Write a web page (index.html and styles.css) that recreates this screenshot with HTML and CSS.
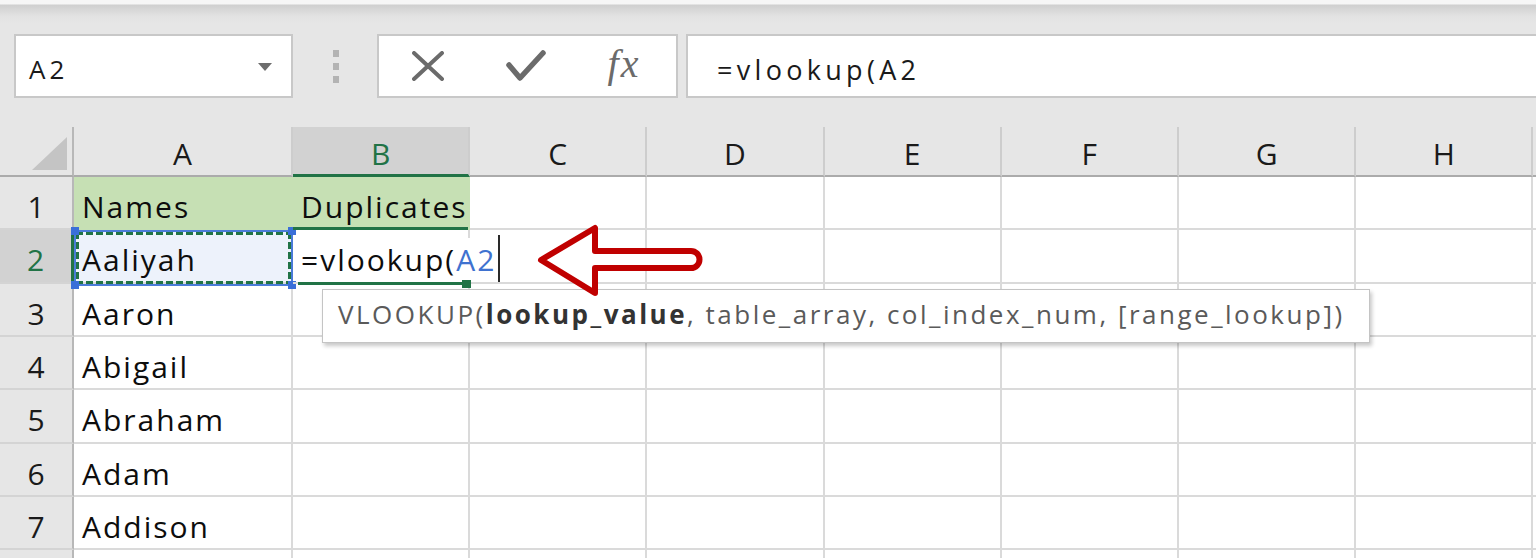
FILE: index.html
```html
<!DOCTYPE html>
<html>
<head>
<meta charset="utf-8">
<link rel="stylesheet" href="styles.css">
</head>
<body>
<div class="topbar">
  <div class="namebox">
    <span class="nb-text">A2</span>
    <svg class="caret" width="14" height="8" viewBox="0 0 14 8"><path d="M0 0H14L7 8Z" fill="#6d6d6d"/></svg>
  </div>
  <div class="grip"><i></i><i></i><i></i></div>
  <div class="btns">
    <svg width="32" height="30" viewBox="0 0 32 30"><path d="M2 2L30 28M30 2L2 28" stroke="#6b6b6b" stroke-width="4" stroke-linecap="round"/></svg>
    <svg width="40" height="32" viewBox="0 0 40 32"><path d="M3 15L14 28L37 3" fill="none" stroke="#6b6b6b" stroke-width="5.5" stroke-linecap="round" stroke-linejoin="round"/></svg>
    <span class="fx">fx</span>
  </div>
  <div class="formula">=vlookup(A2</div>
</div>

<div class="sheet">
  <div class="grid">
    <div class="corner"><span class="tri"></span></div>
    <div class="h">A</div><div class="h sel">B</div><div class="h">C</div><div class="h">D</div><div class="h">E</div><div class="h">F</div><div class="h">G</div><div class="h">H</div><div class="h"></div>

    <div class="r">1</div><div class="fill">Names</div><div class="fill">Duplicates</div><div></div><div></div><div></div><div></div><div></div><div></div><div></div>

    <div class="r sel">2</div>
    <div class="refcell">Aaliyah<div class="refbox"><div class="dash"></div><i class="k tl"></i><i class="k tr"></i><i class="k bl"></i><i class="k br"></i></div></div>
    <div class="active"><span class="editor">=vlookup(<span class="refc">A2</span></span><i class="handle"></i></div>
    <div></div><div></div><div></div><div></div><div></div><div></div><div></div>

    <div class="r">3</div><div>Aaron</div><div></div><div></div><div></div><div></div><div></div><div></div><div></div><div></div>
    <div class="r">4</div><div>Abigail</div><div></div><div></div><div></div><div></div><div></div><div></div><div></div><div></div>
    <div class="r">5</div><div>Abraham</div><div></div><div></div><div></div><div></div><div></div><div></div><div></div><div></div>
    <div class="r">6</div><div>Adam</div><div></div><div></div><div></div><div></div><div></div><div></div><div></div><div></div>
    <div class="r">7</div><div>Addison</div><div></div><div></div><div></div><div></div><div></div><div></div><div></div><div></div>
    <div class="r"></div><div></div><div></div><div></div><div></div><div></div><div></div><div></div><div></div><div></div>
  </div>

  <div class="tip">VLOOKUP(<b>lookup_value</b>, table_array, col_index_num, [range_lookup])</div>

  <svg class="arrow" width="180" height="90" viewBox="0 0 180 90">
    <path d="M11 45L65 13V36H161A8.5 8.5 0 0 1 161 53H65V78Z" fill="#fff" stroke="#c00000" stroke-width="6" stroke-linejoin="round"/>
  </svg>
</div>
</body>
</html>
```

FILE: styles.css
```css
html, body {
  margin: 0;
  padding: 0;
}

body {
  width: 1536px;
  height: 558px;
  overflow: hidden;
  background: #fff;
  font-family: "Open Sans", "Liberation Sans", sans-serif;
  color: #111;
}

/* ---------- formula bar ---------- */
.topbar {
  height: 127px;
  box-sizing: border-box;
  padding: 34px 0 0 14px;
  display: flex;
  align-items: flex-start;
  background: linear-gradient(#f6f6f6 0, #f6f6f6 4px, #cfcfcf 5px, #e2e2e2 16px, #e6e6e6 24px, #e6e6e6 100%);
}

.namebox {
  width: 279px;
  height: 64px;
  box-sizing: border-box;
  border: 2px solid #c8c8c8;
  background: #fff;
  display: flex;
  justify-content: space-between;
  align-items: flex-start;
  padding: 7px 19px 0 13px;
}

.nb-text {
  font-size: 26px;
  line-height: 53px;
  letter-spacing: 4px;
  color: #1a1a1a;
}

.caret {
  margin-top: 20px;
}

.grip {
  margin-left: 40px;
  width: 6px;
  padding-top: 16px;
  display: flex;
  flex-direction: column;
  gap: 6px;
}

.grip i {
  display: block;
  width: 6px;
  height: 7px;
  background: #b3b3b3;
}

.btns {
  margin-left: 38px;
  width: 301px;
  height: 64px;
  box-sizing: border-box;
  border: 2px solid #c8c8c8;
  background: #fff;
  display: grid;
  grid-template-columns: repeat(3, 98px);
  align-items: center;
  justify-items: center;
}

.fx {
  font-family: "Liberation Serif", "DejaVu Serif", serif;
  font-style: italic;
  font-size: 40px;
  letter-spacing: 2px;
  color: #6b6b6b;
  line-height: 1;
  margin-top: -4px;
}

.formula {
  flex: 1;
  margin-left: 8px;
  margin-right: -20px;
  height: 64px;
  box-sizing: border-box;
  border: 2px solid #c8c8c8;
  background: #fff;
  padding: 7px 0 0 29px;
  font-size: 27px;
  line-height: 53px;
  letter-spacing: 4.3px;
  color: #1a1a1a;
  white-space: nowrap;
}

/* ---------- sheet ---------- */
.sheet {
  position: relative;
}

.grid {
  display: grid;
  grid-template-columns: 74px 219px repeat(8, 177.2px);
  grid-template-rows: 50px repeat(8, 53.33px);
  font-size: 30px;
  letter-spacing: 2px;
}

.grid > div {
  box-sizing: border-box;
  min-width: 0;
  border-right: 2px solid #dadada;
  border-bottom: 2px solid #dadada;
  padding: 8px 0 0 8px;
  line-height: 43px;
  white-space: nowrap;
  color: #0d0d0d;
}

.grid > .corner {
  background: #e6e6e6;
  border-right-color: #b8b8b8;
  border-bottom-color: #ababab;
  padding: 0 5px 5px 0;
  display: flex;
  justify-content: flex-end;
  align-items: flex-end;
}

.tri {
  width: 35px;
  height: 33px;
  background: #c4c4c4;
  clip-path: polygon(100% 0, 100% 100%, 0 100%);
}

.grid > .h {
  background: #e6e6e6;
  border-right-color: #cdcdcd;
  border-bottom-color: #ababab;
  text-align: center;
  padding: 5px 0 0;
  letter-spacing: 0;
  color: #1a1a1a;
}

.grid > .h.sel {
  background: #d2d2d2;
  color: #217346;
  border-bottom: 3px solid #217346;
}

.grid > .r {
  background: #e6e6e6;
  border-right-color: #b8b8b8;
  border-bottom-color: #d4d4d4;
  text-align: center;
  padding-left: 0;
  letter-spacing: 0;
  color: #1a1a1a;
}

.grid > .r.sel {
  background: #d2d2d2;
  color: #217346;
  border-right: 3px solid #217346;
}

.grid > .fill {
  background: #c6e0b4;
  border-color: #c6e0b4;
}

/* referenced cell A2 */
.grid > .refcell {
  position: relative;
  background: #edf2fb;
}

.refbox {
  position: absolute;
  left: 0;
  top: 0;
  right: -2px;
  bottom: -4px;
  border: 2px solid #4a7bd8;
}

.dash {
  position: absolute;
  inset: 0;
  background:
    repeating-linear-gradient(90deg, #217346 0 7px, transparent 7px 10px) left top / 100% 3px no-repeat,
    repeating-linear-gradient(90deg, #217346 0 7px, transparent 7px 10px) left bottom / 100% 3px no-repeat,
    repeating-linear-gradient(180deg, #217346 0 7px, transparent 7px 10px) left top / 3px 100% no-repeat,
    repeating-linear-gradient(180deg, #217346 0 7px, transparent 7px 10px) right top / 3px 100% no-repeat;
}

.k {
  position: absolute;
  width: 8px;
  height: 8px;
  background: #3a6fd8;
}

.k.tl { left: -5px; top: -5px; }
.k.tr { right: -5px; top: -5px; }
.k.bl { left: -5px; bottom: -5px; }
.k.br { right: -5px; bottom: -5px; }

/* active cell B2 in edit mode */
.grid > .active {
  position: relative;
}

.active::before {
  content: "";
  position: absolute;
  left: 0;
  right: 0;
  top: -3px;
  height: 3px;
  background: #217346;
}

.active::after {
  content: "";
  position: absolute;
  left: 5px;
  right: 5px;
  bottom: -3px;
  height: 3px;
  background: #217346;
}

.handle {
  position: absolute;
  right: -3px;
  bottom: -6px;
  width: 9px;
  height: 8px;
  background: #217346;
}

.editor {
  position: relative;
  display: inline-block;
  background: #fff;
  padding-right: 6px;
}

.editor::after {
  content: "";
  position: absolute;
  right: 2px;
  top: -3px;
  width: 2px;
  height: 47px;
  background: #2a2a2a;
}

.refc {
  color: #3f72d0;
}

/* function tooltip */
.tip {
  position: absolute;
  left: 322px;
  top: 162px;
  width: 1048px;
  height: 54px;
  box-sizing: border-box;
  border: 1px solid #c4c4c4;
  background: #fff;
  box-shadow: 2px 3px 4px rgba(0, 0, 0, 0.22);
  padding: 0 0 0 15px;
  font-size: 26px;
  line-height: 48px;
  letter-spacing: 2.5px;
  color: #5a5a5a;
  white-space: nowrap;
}

.tip b {
  color: #333;
  font-weight: 700;
}

.arrow {
  position: absolute;
  left: 530px;
  top: 88px;
}
```
